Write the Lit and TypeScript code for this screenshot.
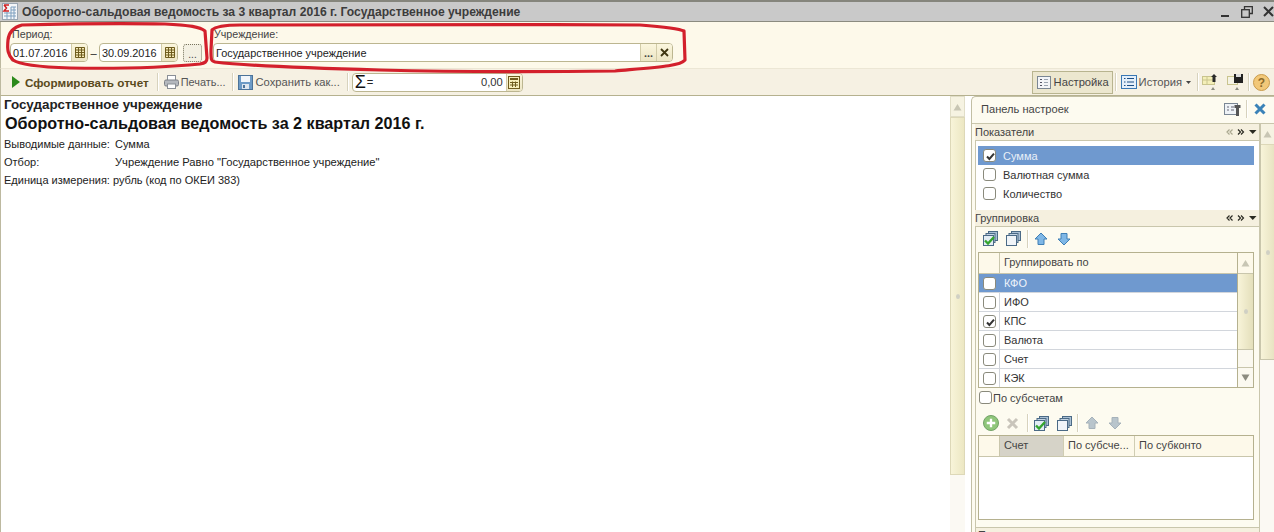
import { LitElement, html, css, svg } from "lit";
import { customElement } from "lit/decorators.js";

const check = svg`<path d="M3 6.500 L5.400 9 L10 3.600" fill="none" stroke="#333" stroke-width="2"/>`;
const cb = (on: boolean) => html`<span class="cb">${on ? html`<svg width="13" height="13" viewBox="0 0 13 13">${check}</svg>` : ""}</span>`;

const calGrid = html`<svg width="10" height="11" viewBox="0 0 10 11"><rect x="0" y="0" width="10" height="11" fill="#f4e9b5"/><path d="M.5 .5H9.500V10.500H.5ZM.5 3H9.500M.5 5.500H9.500M.5 8H9.500M3.500 .5V10.500M6.500 .5V10.500" stroke="#6f5c1e" fill="none"/></svg>`;
const calc = html`<svg width="12" height="13" viewBox="0 0 12 13"><rect x=".5" y=".5" width="11" height="12" fill="#f6eebc" stroke="#6f5c1e"/><rect x="2" y="2" width="8" height="2" fill="#6f5c1e"/><path d="M2 6.500H10M2 9H10M4.500 5.500V11M7.500 5.500V11" stroke="#6f5c1e" fill="none"/></svg>`;

const stack = (ok: boolean) => html`<svg width="16" height="15" viewBox="0 0 16 15">
  <rect x="5.500" y=".5" width="9" height="9" fill="#a9bfd4" stroke="#4b6a86"/>
  <rect x="3" y="2.500" width="9" height="9" fill="#c3d3e2" stroke="#4b6a86"/>
  <rect x=".5" y="4.500" width="10" height="10" fill="${ok ? "#e4edf4" : "#f0f4f8"}" stroke="#4b6a86"/>
  ${ok ? svg`<path d="M2 9.500 L5 12.500 L11 6" fill="none" stroke="#35a52e" stroke-width="2.400"/>` : ""}
</svg>`;
const arrow = (up: boolean, fill: string, stroke: string) => html`<svg width="14" height="14" viewBox="0 0 14 14"><g transform="${up ? "" : "rotate(180 7 7)"}"><path d="M7 1 L13 7 H10 V12.500 H4 V7 H1 Z" fill="${fill}" stroke="${stroke}"/></g></svg>`;
const triUp = (c: string) => html`<svg width="9" height="8" viewBox="0 0 9 8"><path d="M4.500 1 L8.500 7.500 H.5 Z" fill="${c}"/></svg>`;
const triDown = (c: string) => html`<svg width="9" height="8" viewBox="0 0 9 8"><path d="M4.500 7 L8.500 .5 H.5 Z" fill="${c}"/></svg>`;
const nav = (muted: boolean) => {
  const c = muted ? "#a9a78f" : "#2a2a22";
  return html`<span class="nav"><svg width="31" height="8" viewBox="0 0 31 8">
    <path d="M3.500 1.500 L1 4 L3.500 6.500 M6.500 1.500 L4 4 L6.500 6.500" fill="none" stroke="${c}" stroke-width="1.200"/>
    <path d="M12 1.500 L14.500 4 L12 6.500 M15 1.500 L17.500 4 L15 6.500" fill="none" stroke="#2a2a22" stroke-width="1.200"/>
    <path d="M23 2 H30.500 L26.750 6 Z" fill="#2a2a22"/></svg></span>`;
};
const thumb = html`<span class="grip"></span>`;

const groups: [string, boolean, boolean][] = [
  ["КФО", false, true],
  ["ИФО", false, false],
  ["КПС", true, false],
  ["Валюта", false, false],
  ["Счет", false, false],
  ["КЭК", false, false],
];

@customElement("app-root")
export class AppRoot extends LitElement {
  static styles = css`
    :host { display: block; position: relative; width: 1274px; height: 532px; overflow: hidden; background: #fff;
      font: 11.2px "Liberation Sans", Arial, sans-serif; color: #222; }
    * { box-sizing: border-box; }
    svg { display: block; flex: none; }
    .title { height: 22px; background: #c9c9c9; border-top: 2px solid #85857c; border-bottom: 1px solid #8b8b80; display: flex; align-items: center; padding: 0 0 0 2px; gap: 4px; font-weight: bold; font-size: 12.13px; color: #3c3c3c; }
    .title .t { flex: 1; white-space: nowrap; }
    .winbtns { display: flex; align-items: center; gap: 10px; }
    .head { height: 46px; background: #fdf9ea; display: flex; padding: 6px 0 0 10px; border-left: 1px solid #bdb9a0; }
    .fld { display: flex; flex-direction: column; }
    .lab { height: 15px; padding-left: 1px; line-height: 12px; font-size: 10.7px; color: #444; }
    .row { display: flex; align-items: center; height: 19px; }
    .inp { height: 19px; display: flex; border: 1px solid #bcb690; border-radius: 4px; background: #fff; overflow: hidden; font-size: 10.9px; align-items: stretch; }
    .inp .v { flex: 1; padding-left: 2px; line-height: 18px; white-space: nowrap; color: #222; }
    .inp .b { flex: none; width: 16px; display: flex; align-items: center; justify-content: center; background: linear-gradient(#fbf6dd, #ece5c4); border-left: 1px solid #d2cca8; color: #444; }
    .date1 { width: 78px; margin-left: -1px; }
    .date2 { width: 79px; }
    .dash { width: 11px; text-align: center; }
    .more { width: 19px; height: 18px; margin-left: 5px; border: 1px dotted #77735c; border-radius: 3px; background: #f3f0e2; display: flex; align-items: flex-end; justify-content: center; font-size: 10px; line-height: 12px; color: #444; }
    .org { margin-left: 11px; }
    .org .inp { width: 460px; }
    .org .b { font-weight: bold; }
    .tb { height: 28px; background: #f6f1e3; border-top: 1px solid #ece7d5; border-bottom: 1px solid #b5b18f; display: flex; align-items: center; padding-left: 11px; border-left: 1px solid #bdb9a0; white-space: nowrap; color: #555; }
    .tb .i { display: flex; align-items: center; gap: 2px; }
    .tb .prn { font-size: 10.9px; }
    .sep { width: 1px; height: 18px; background: #d7d2bd; box-shadow: 1px 0 #fff; flex: none; }
    .tb .gen { font-weight: bold; color: #5a4a1c; gap: 5px; font-size: 11.7px; }
    .sp1 { margin: 0 6px 0 8px; }
    .sp2 { margin: 0 5px 0 7px; }
    .sp3 { margin: 0 4px 0 7px; }
    .sp4 { margin: 0 5px 0 2px; }
    .sp5 { margin: 0 4px 0 0; }
    .car { margin: 0 6px 0 4px; }
    .sv { margin: 0 4px 0 7px; }
    .hlp { margin-right: 4px; }
    .sum { width: 171px; height: 19px; display: flex; border: 1px solid #bcb690; border-radius: 4px; background: #fff; align-items: center; overflow: hidden; }
    .sum .s { width: 14px; font: 18px "Liberation Sans", sans-serif; color: #111; padding-left: 2px; line-height: 17px; }
    .sum .e { flex: 1; color: #222; padding-left: 0; }
    .sum .n { color: #333; padding-right: 3px; }
    .sum .b { width: 16px; height: 17px; display: flex; align-items: center; justify-content: center; background: linear-gradient(#fbf6dd, #ece5c4); border-left: 1px solid #d2cca8; }
    .spring { flex: 1; }
    .active { height: 23px; width: 81px; background: #ece7cf; border: 1px solid #b8b48f; display: flex; align-items: center; gap: 3px; padding-left: 4px; color: #444; }
    .main { display: flex; height: 436px; border-left: 1px solid #bdb9a0; }
    .rep { width: 949px; padding: 1px 0 0 3px; color: #222; font-size: 11px; }
    .rep .org-name { font-weight: bold; font-size: 13.4px; line-height: 15px; color: #222; }
    .rep h1 { margin: 1px 0 0 1px; font-size: 16.15px; line-height: 20px; color: #111; font-weight: bold; }
    .det { display: grid; grid-template-columns: 111px 1fr; grid-auto-rows: 18px; align-items: center; margin-top: 2px; }
    .det .wide { grid-column: 1 / 3; }
    .det .flt { font-size: 11.2px; }
    .vs { width: 15px; flex: none; display: flex; flex-direction: column; background: #fbf9f3; }
    .vs .u { height: 21px; background: #f6f3e2; border: 1px solid #e1dec8; display: flex; align-items: center; justify-content: center; }
    .vs .th { height: 358px; background: linear-gradient(90deg, #f8f4d9, #ece7c3); border: 1px solid #ddd8b8; display: flex; align-items: center; justify-content: center; }
    .grip { width: 4px; height: 5px; border-radius: 50%; background: #d0d0c4; display: block; }
    .gap { width: 6px; flex: none; background: #fff; }
    .panel { flex: 1; border: 1px solid #c2bfa4; border-right: 0; border-bottom: 0; border-radius: 5px 0 0 0; background: #fdfbf0; display: flex; flex-direction: column; min-width: 0; }
    .ph { height: 26px; display: flex; align-items: center; padding: 0 5px 2px 9px; flex: none; font-size: 11.1px; color: #444; }
    .ph .t { flex: 1; }
    .sepb { margin: 0 7px 0 5px; }
    .xclose { margin-right: 3px; }
    .pbody { flex: 1; display: flex; border-top: 1px solid #c9c6ac; min-height: 0; }
    .pcol { width: 288px; flex: none; padding-left: 3px; display: flex; flex-direction: column; }
    .sh { height: 17px; background: #f5f0df; border-bottom: 1px solid #c9c6ac; border-right: 1px solid #c9c6ac; display: flex; align-items: center; justify-content: space-between; padding: 0 2px 0 0; flex: none; color: #444; font-size: 11px; }
    .nav { display: block; }
    .sec1 { height: 69px; background: #fff; border-left: 1px solid #c9c6ac; border-right: 1px solid #c9c6ac; padding: 5px 5px 0 2px; flex: none; }
    .sr { height: 19px; display: flex; align-items: center; gap: 7px; padding-left: 5px; color: #333; font-size: 11px; }
    .sr.sel { background: #6f99cf; color: #e9f0f8; }
    .cb { width: 13px; height: 13px; border: 1px solid #8a8a7c; border-radius: 3px; background: #fff; display: block; flex: none; }
    .sec2 { flex: 1; background: #fdfbf0; border-left: 1px solid #c9c6ac; border-right: 1px solid #c9c6ac; padding: 0 5px 0 2px; display: flex; flex-direction: column; min-height: 0; overflow: hidden; }
    .tools { height: 23px; margin-bottom: 2px; display: flex; align-items: center; padding-left: 5px; flex: none; }
    .slot { display: block; flex: none; }
    .w23 { width: 23px; }
    .w21 { width: 21px; }
    .w20 { width: 20px; }
    .tools .sep { height: 18px; }
    .mr6 { margin-right: 6px; }
    .mr7 { margin-right: 7px; }
    .grid { border: 1px solid #b5b18f; display: flex; background: #fff; flex: none; }
    .gl { flex: 1; min-width: 0; }
    .gh { height: 21px; display: flex; background: #fdf9ea; border-bottom: 1px solid #c9c6ac; color: #444; font-size: 11px; }
    .gh .c0 { width: 21px; border-right: 1px solid #c9c6ac; flex: none; }
    .gh .c { padding-left: 4px; line-height: 19px; border-right: 1px solid #d0cdb3; white-space: nowrap; overflow: hidden; }
    .gh .c:last-child { border-right: 0; }
    .gh .c1 { width: 64px; }
    .gh .c2 { width: 71px; }
    .gr { height: 19px; display: flex; align-items: center; border-bottom: 1px solid #d2d6dc; color: #333; font-size: 11px; }
    .gr:last-child { height: 18px; border-bottom: 0; }
    .gr .cbw { width: 21px; height: 100%; flex: none; border-right: 1px solid #d2d6dc; display: flex; align-items: center; justify-content: center; }
    .gr .tx { padding-left: 4px; }
    .gr.sel { background: #6f99cf; color: #eef3fa; }
    .gr.sel .cbw { border-right-color: #6f99cf; }
    .gs { width: 16px; flex: none; border-left: 1px solid #b5b18f; display: flex; flex-direction: column; background: #fbf9f0; }
    .gs .u { height: 21px; display: flex; align-items: center; justify-content: center; background: #fdf9ea; border-bottom: 1px solid #c9c6ac; flex: none; }
    .gs .d { height: 20px; display: flex; align-items: center; justify-content: center; border-top: 1px solid #c9c6ac; flex: none; }
    .gs .tr { flex: 1; }
    .gs .th { height: 76px; background: linear-gradient(90deg, #f8f4d9, #e4dfbb); border-bottom: 1px solid #c9c6ac; display: flex; align-items: center; justify-content: center; flex: none; }
    .sub { display: flex; align-items: center; gap: 1px; height: 15px; margin-top: 2px; margin-left: 1px; color: #444; font-size: 11px; flex: none; }
    .tools2 { margin-top: 7px; height: 22px; margin-bottom: 1px; }
    .g2 { height: 85px; display: block; }
    .g2 .gh .sel { background: #d6d3c8; }
    .plast { height: 12px; margin: 7px -5px 0 -3px; border-top: 1px solid #c9c6ac; background: #f5f0df; padding-left: 3px; font-size: 11px; line-height: 14px; color: #444; flex: none; }
    .ps { flex: 1; display: flex; flex-direction: column; min-width: 0; background: #fbf9f3; }
    .ps .box { height: 236px; display: flex; flex-direction: column; border-left: 1px solid #c9c6ac; border-bottom: 1px solid #c9c6ac; }
    .ps .u { height: 21px; background: #f6f3e2; border-bottom: 1px solid #ddd8b8; display: flex; align-items: center; justify-content: center; }
    .ps .th { flex: 1; background: linear-gradient(90deg, #f8f4d9, #e8e3c2); display: flex; align-items: center; justify-content: center; }
    .marks { position: absolute; left: 0; top: 0; pointer-events: none; }
  `;

  render() {
    return html`
      <div class="title">
        <svg width="16" height="17" viewBox="0 0 16 17"><rect x=".5" y=".5" width="15" height="16" fill="#f4f6f8" stroke="#9aa6b2"/><path d="M2 2 H7 M2 2 L4.500 5 L2 8 H7" fill="none" stroke="#d02020" stroke-width="1.500"/><path d="M9 4H14M9 7H14M2 10H14M2 13H14M5 9V16M9 4V16M12 4V16" stroke="#7fa0bf" fill="none"/></svg>
        <span class="t">Оборотно-сальдовая ведомость за 3 квартал 2016 г. Государственное учреждение</span>
        <span class="winbtns">
          <svg width="10" height="12" viewBox="0 0 10 12"><rect x="0" y="9" width="8" height="2" fill="#333"/></svg>
          <svg width="12" height="12" viewBox="0 0 12 12"><path d="M3.500 3 V.7 H11.300 V7.500 H8.500" fill="none" stroke="#333" stroke-width="1.300"/><rect x=".7" y="3.700" width="7.600" height="7.600" fill="none" stroke="#333" stroke-width="1.300"/></svg>
          <svg width="11" height="11" viewBox="0 0 11 11"><path d="M1 1 L10 10 M10 1 L1 10" stroke="#333" stroke-width="2"/></svg>
        </span>
      </div>
      <div class="head">
        <div class="fld">
          <div class="lab">Период:</div>
          <div class="row">
            <div class="inp date1"><span class="v">01.07.2016</span><span class="b">${calGrid}</span></div>
            <span class="dash">–</span>
            <div class="inp date2"><span class="v">30.09.2016</span><span class="b">${calGrid}</span></div>
            <div class="more">...</div>
          </div>
        </div>
        <div class="fld org">
          <div class="lab">Учреждение:</div>
          <div class="row">
            <div class="inp"><span class="v">Государственное учреждение</span><span class="b">...</span>
              <span class="b"><svg width="9" height="9" viewBox="0 0 9 9"><path d="M1 1 L8 8 M8 1 L1 8" stroke="#3e3510" stroke-width="1.800"/></svg></span></div>
          </div>
        </div>
      </div>
      <div class="tb">
        <span class="i gen"><svg width="8" height="12" viewBox="0 0 8 12"><path d="M0 0 L8 6 L0 12 Z" fill="#2c8a1c"/></svg>Сформировать отчет</span>
        <span class="sep sp1"></span>
        <span class="i prn"><svg width="15" height="14" viewBox="0 0 15 14"><rect x="3.500" y=".5" width="8" height="5" fill="#fff" stroke="#8a8f96"/><rect x=".5" y="5" width="14" height="6" rx="1.500" fill="#b4b8be" stroke="#7c8087"/><rect x="3.500" y="9" width="8" height="4.500" fill="#fff" stroke="#8a8f96"/></svg>Печать...</span>
        <span class="sep sp2"></span>
        <span class="i"><svg width="15" height="15" viewBox="0 0 15 15"><rect x=".5" y=".5" width="14" height="14" fill="#6e9bc6" stroke="#4c7399"/><rect x="3" y="1" width="9" height="6" fill="#f2f6fa"/><rect x="4" y="9" width="7" height="5" fill="#dfe6ee"/><rect x="5" y="10" width="2" height="3" fill="#4c7399"/></svg>Сохранить как...</span>
        <span class="sep sp3"></span>
        <div class="sum"><span class="s">Σ</span><span class="e">=</span><span class="n">0,00</span><span class="b">${calc}</span></div>
        <span class="spring"></span>
        <span class="active"><svg width="14" height="13" viewBox="0 0 14 13"><rect x=".5" y=".5" width="13" height="12" fill="#f3f5f8" stroke="#7b8794"/><path d="M3 3.500H5M3 6.500H5M3 9.500H5" stroke="#556" /><path d="M7 3.500H11M7 6.500H11M7 9.500H11" stroke="#9aa4b0"/></svg>Настройка</span>
        <span class="sep sp4"></span>
        <span class="i"><svg width="16" height="14" viewBox="0 0 16 14"><rect x=".5" y=".5" width="15" height="13" fill="#e4effa" stroke="#3a78b4"/><path d="M3 3.500H4.500M3 7H4.500M3 10.500H4.500M6 3.500H13M6 7H13M6 10.500H13" stroke="#1d4f85"/></svg>История</span>
        <svg class="car" width="5" height="3" viewBox="0 0 5 3"><path d="M0 0H5L2.500 3Z" fill="#444"/></svg>
        <span class="sep sp5"></span>
        <svg width="18" height="18" viewBox="0 0 18 18"><rect x=".5" y="3.500" width="12" height="8" fill="#f4efb8" stroke="#c9c48e"/><path d="M1 7H12M5 4V11" stroke="#c9c48e"/><path d="M12 1 L15 4 H13.500 V9 H10.500 V4 H9 Z" fill="#2a2a2a"/><path d="M9 17 L11 14 L13 17 Z" fill="#8c8c80"/></svg>
        <svg class="sv" width="17" height="18" viewBox="0 0 17 18"><rect x=".5" y="3.500" width="10" height="8" fill="#f4f2e4" stroke="#c9c48e"/><rect x="7" y="1" width="9" height="9" fill="#222"/><rect x="9" y="1" width="5" height="3" fill="#ddd"/><path d="M8 17 L10 14 L12 17 Z" fill="#8c8c80"/></svg>
        <span class="sep sp5"></span>
        <svg class="hlp" width="17" height="17" viewBox="0 0 17 17"><circle cx="8.500" cy="8.500" r="8" fill="#f2c879" stroke="#c99b4b"/><text x="8.500" y="13" text-anchor="middle" font-size="12" font-weight="bold" font-family="Liberation Sans" fill="#8b6a2a">?</text></svg>
      </div>
      <div class="main">
        <div class="rep">
          <div class="org-name">Государственное учреждение</div>
          <h1>Оборотно-сальдовая ведомость за 2 квартал 2016 г.</h1>
          <div class="det">
            <span>Выводимые данные:</span><span>Сумма</span>
            <span>Отбор:</span><span class="flt">Учреждение Равно "Государственное учреждение"</span>
            <span class="wide">Единица измерения: рубль (код по ОКЕИ 383)</span>
          </div>
        </div>
        <div class="vs">
          <div class="u">${triUp("#c8c6b4")}</div>
          <div class="th">${thumb}</div>
        </div>
        <div class="gap"></div>
        <div class="panel">
          <div class="ph"><span class="t">Панель настроек</span>
            <svg width="17" height="16" viewBox="0 0 17 16"><rect x=".5" y="2.500" width="13" height="11" fill="#eef2f6" stroke="#7b8794"/><path d="M3 6H5M3 9H5M7 6H10M7 9H10" stroke="#667"/><rect x="12" y="6" width="3" height="9" fill="#555"/><rect x="10.500" y="4" width="6" height="3" fill="#555"/></svg>
            <span class="sep sepb"></span>
            <svg class="xclose" width="12" height="12" viewBox="0 0 12 12"><path d="M1.500 1.500 L10.500 10.500 M10.500 1.500 L1.500 10.500" stroke="#3a82b8" stroke-width="3"/></svg>
          </div>
          <div class="pbody">
            <div class="pcol">
              <div class="sh"><span>Показатели</span>${nav(true)}</div>
              <div class="sec1">
                <div class="sr sel">${cb(true)}<span>Сумма</span></div>
                <div class="sr">${cb(false)}<span>Валютная сумма</span></div>
                <div class="sr">${cb(false)}<span>Количество</span></div>
              </div>
              <div class="sh"><span>Группировка</span>${nav(false)}</div>
              <div class="sec2">
                <div class="tools">
                  <span class="slot w23">${stack(true)}</span><span class="slot w21">${stack(false)}</span><span class="sep mr6"></span>
                  <span class="slot w23">${arrow(true, "#7fb7e6", "#3f7fb5")}</span><span class="slot">${arrow(false, "#7fb7e6", "#3f7fb5")}</span>
                </div>
                <div class="grid">
                  <div class="gl">
                    <div class="gh"><span class="c0"></span><span class="c">Группировать по</span></div>
                    ${groups.map(([n, on, sel]) => html`<div class="gr ${sel ? "sel" : ""}"><span class="cbw">${cb(on)}</span><span class="tx">${n}</span></div>`)}
                  </div>
                  <div class="gs">
                    <div class="u">${triUp("#c8c6b4")}</div>
                    <div class="th">${thumb}</div>
                    <div class="tr"></div>
                    <div class="d">${triDown("#8c8c80")}</div>
                  </div>
                </div>
                <div class="sub">${cb(false)}<span>По субсчетам</span></div>
                <div class="tools tools2">
                  <span class="slot w23"><svg width="16" height="16" viewBox="0 0 17 17"><circle cx="8.500" cy="8.500" r="8" fill="#8fc67a" stroke="#6e9e63"/><path d="M8.500 4V13M4 8.500H13" stroke="#fff" stroke-width="2.500"/></svg></span>
                  <span class="slot w21"><svg width="13" height="13" viewBox="0 0 13 13"><path d="M2 2 L11 11 M11 2 L2 11" stroke="#c9c5bb" stroke-width="3"/></svg></span>
                  <span class="sep mr6"></span>
                  <span class="slot w23">${stack(true)}</span><span class="slot w20">${stack(false)}</span><span class="sep mr7"></span>
                  <span class="slot w23">${arrow(true, "#b9c5cc", "#a6b2ba")}</span><span class="slot">${arrow(false, "#b9c5cc", "#a6b2ba")}</span>
                </div>
                <div class="grid g2">
                  <div class="gh"><span class="c0"></span><span class="c c1 sel">Счет</span><span class="c c2">По субсче...</span><span class="c">По субконто</span></div>
                </div>
                <div class="plast">П</div>
              </div>
            </div>
            <div class="ps">
              <div class="box"><div class="u">${triUp("#c8c6b4")}</div><div class="th">${thumb}</div></div>
            </div>
          </div>
        </div>
      </div>
      <svg class="marks" width="1274" height="532" viewBox="0 0 1274 532" fill="none" stroke="#d3202c" stroke-width="3.200" stroke-linejoin="round">
        <path d="M22 25 C60 24 120 23 165 24 C190 25 200 27 205 31 L207 58 C207 62 205 63 200 64 C180 66 130 69 70 68 C40 67 20 65 13 60 C8 55 7 50 8 40 C9 31 14 27 22 25 Z"/>
        <path d="M212 30 C216 26 225 25 240 25 C350 25 500 24 640 25 C665 27 680 29 684 31 L685 60 C680 66 660 67 615 71 C540 72 460 72 380 70 C300 68 240 65 215 62 C211 61 211 60 211 50 Z"/>
      </svg>
    `;
  }
}
